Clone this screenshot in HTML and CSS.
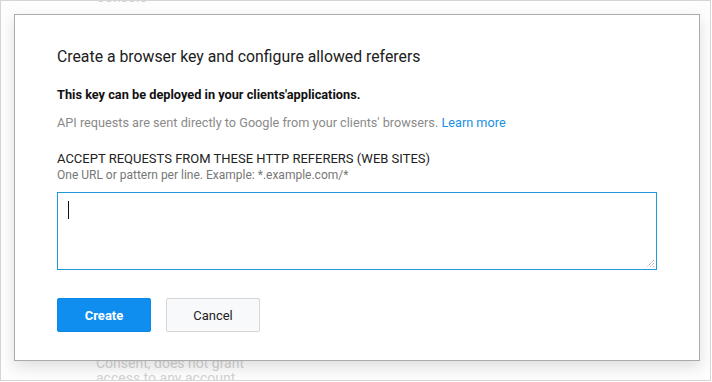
FILE: index.html
```html
<!DOCTYPE html>
<html>
<head>
<meta charset="utf-8">
<link rel="stylesheet" href="styles.css">
</head>
<body>
<div class="frame">
  <div class="backdrop">
    <div class="bg-top">Console</div>
    <div class="bg-spacer"></div>
    <div class="bg-line">Consent, does not grant</div>
    <div class="bg-line">access to any account</div>
  </div>
  <div class="dialog">
    <h1 class="title">Create a browser key and configure allowed referers</h1>
    <p class="lead">This key can be deployed in your clients'applications.</p>
    <p class="note">API requests are sent directly to Google from your clients' browsers. <a class="link" href="#">Learn more</a></p>
    <div class="label">ACCEPT REQUESTS FROM THESE HTTP REFERERS (WEB SITES)</div>
    <div class="hint">One URL or pattern per line. Example: *.example.com/*</div>
    <div class="field">
      <span class="caret"></span>
      <svg class="grip" width="10" height="10" viewBox="0 0 10 10"><path d="M9 2 L2 9 M9 5 L5 9 M9 8 L8 9" stroke="#8a8a8a" stroke-width="1" fill="none" stroke-dasharray="1 1"/></svg>
    </div>
    <div class="actions">
      <button class="btn btn-primary">Create</button>
      <button class="btn btn-secondary">Cancel</button>
    </div>
  </div>
</div>
</body>
</html>
```
FILE: styles.css
```css
html, body {
  margin: 0;
  padding: 0;
  background: #ffffff;
}
body {
  font-family: Roboto, "Liberation Sans", Arial, sans-serif;
  width: 712px;
  height: 382px;
  overflow: hidden;
}
.frame {
  position: relative;
  box-sizing: border-box;
  width: 711px;
  height: 381px;
  border: 1px solid #d5d5d5;
  background: #fdfdfd;
  overflow: hidden;
}
.backdrop {
  display: flex;
  flex-direction: column;
  padding-left: 95px;
  color: #d2d2d2;
  font-size: 14px;
  line-height: 16px;
}
.bg-top {
  margin-top: -12px;
  height: 16px;
}
.bg-spacer {
  height: 350px;
}
.bg-line {
  height: 15px;
}
.dialog {
  position: absolute;
  left: 13px;
  top: 13px;
  box-sizing: border-box;
  width: 686px;
  height: 347px;
  background: #ffffff;
  border: 1px solid #ababab;
  box-shadow: 0 6px 14px rgba(0, 0, 0, 0.12);
  padding: 32px 42px 0 42px;
  display: flex;
  flex-direction: column;
  align-items: flex-start;
}
.title {
  margin: 0;
  font-size: 15.8px;
  line-height: 20px;
  font-weight: 400;
  color: #202020;
}
.lead {
  margin: 20px 0 0 0;
  font-size: 12.75px;
  line-height: 16px;
  font-weight: 700;
  color: #111111;
}
.note {
  margin: 12px 0 0 0;
  font-size: 12.7px;
  line-height: 16px;
  color: #8a8a8a;
}
.link {
  color: #1a8fe3;
  text-decoration: none;
}
.label {
  margin-top: 20px;
  font-size: 13px;
  line-height: 16px;
  color: #222222;
}
.hint {
  font-size: 12px;
  line-height: 16px;
  color: #777777;
}
.field {
  position: relative;
  margin-top: 9px;
  box-sizing: border-box;
  width: 600px;
  height: 78px;
  border: 1px solid #1f9ad8;
  background: #ffffff;
}
.caret {
  position: absolute;
  left: 10px;
  top: 8px;
  width: 1px;
  height: 18px;
  background: #111111;
}
.grip {
  position: absolute;
  right: 1px;
  bottom: 1px;
}
.actions {
  display: flex;
  gap: 15px;
  margin-top: 28px;
}
.btn {
  box-sizing: border-box;
  width: 94px;
  height: 34px;
  border-radius: 2px;
  font-family: Roboto, "Liberation Sans", Arial, sans-serif;
  font-size: 13px;
  cursor: pointer;
}
.btn-primary {
  background: #0f8ef0;
  border: 1px solid #0b87e6;
  color: #ffffff;
  font-weight: 700;
}
.btn-secondary {
  background: #f8f9fa;
  border: 1px solid #d6d6d6;
  color: #222222;
}
```
